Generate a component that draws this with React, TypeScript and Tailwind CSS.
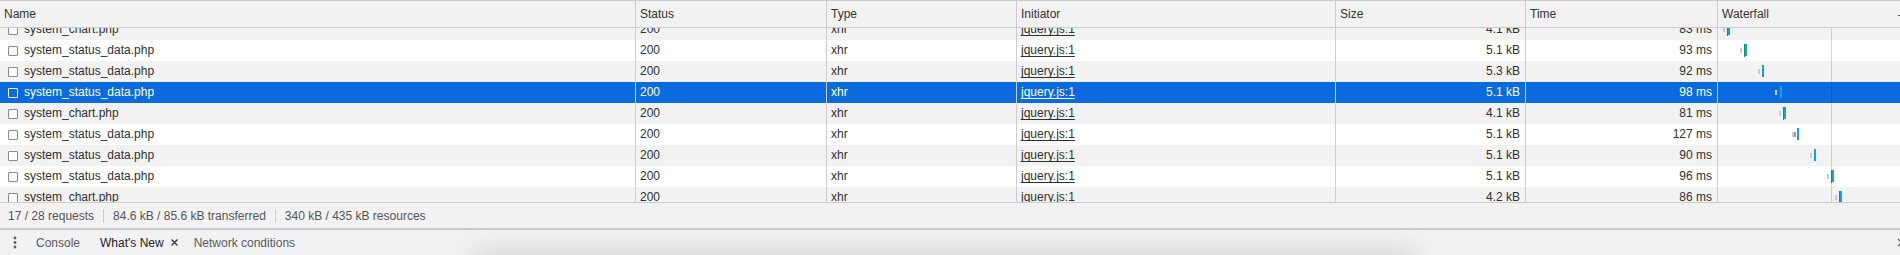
import React from 'react';

type Req = {
  name: string;
  size: string;
  time: string;
  queue: number;
  stall?: number;
  wait?: number;
  dl: number;
  selected?: boolean;
};

const requests: Req[] = [
  { name: 'system_chart.php', size: '4.1 kB', time: '83 ms', queue: 5, wait: 9, dl: 10 },
  { name: 'system_status_data.php', size: '5.1 kB', time: '93 ms', queue: 22, wait: 26, dl: 27 },
  { name: 'system_status_data.php', size: '5.3 kB', time: '92 ms', queue: 40, dl: 44 },
  { name: 'system_status_data.php', size: '5.1 kB', time: '98 ms', queue: 57, wait: 61, dl: 62, selected: true },
  { name: 'system_chart.php', size: '4.1 kB', time: '81 ms', queue: 61, wait: 65, dl: 66 },
  { name: 'system_status_data.php', size: '5.1 kB', time: '127 ms', queue: 74, stall: 76, dl: 79 },
  { name: 'system_status_data.php', size: '5.1 kB', time: '90 ms', queue: 92, dl: 96 },
  { name: 'system_status_data.php', size: '5.1 kB', time: '96 ms', queue: 109, wait: 113, dl: 114 },
  { name: 'system_chart.php', size: '4.2 kB', time: '86 ms', queue: 117, wait: 121, dl: 122 },
];

const cols = 'grid grid-cols-[636px_191px_190px_319px_190px_192px_1fr]';
const cell = 'border-r border-[#cdcdcd] px-[4px] truncate';

const Row = ({ r, i }: { r: Req; i: number }) => {
  const bg = r.selected ? 'bg-[#0b6bde] text-white' : i % 2 === 0 ? 'bg-[#f2f2f2] text-[#303030]' : 'bg-white text-[#303030]';
  return (
    <div className={`${cols} h-[21px] leading-[21px] ${bg}`}>
      <div className={`${cell} flex items-center pl-[8px]`}>
        <span className={`w-[10px] h-[10px] shrink-0 border rounded-[1px] ${r.selected ? 'border-white' : 'border-[#8a8a8a] bg-white'}`} />
        <span className="ml-[6px] truncate">{r.name}</span>
      </div>
      <div className={cell}>200</div>
      <div className={cell}>xhr</div>
      <div className={cell}>
        <span className="underline underline-offset-[2px]">jquery.js:1</span>
      </div>
      <div className={`${cell} text-right pr-[5px]`}>{r.size}</div>
      <div className={`${cell} text-right pr-[5px]`}>{r.time}</div>
      <div className="relative">
        <span className="absolute left-[113px] top-0 bottom-0 w-px bg-black/15" />
        <span className="absolute top-[8px] h-[5px] w-[2px] bg-[#cccccc]" style={{ left: r.queue }} />
        {r.stall !== undefined && (
          <span className="absolute top-[8px] h-[5px] w-[2px] bg-[#9a9a9a]" style={{ left: r.stall }} />
        )}
        {r.wait !== undefined && (
          <span className="absolute top-[4px] h-[13px] w-px bg-[#14953f]" style={{ left: r.wait }} />
        )}
        <span className="absolute top-[4px] h-[12px] w-[2px] bg-[#0aa5f0]" style={{ left: r.dl }} />
      </div>
    </div>
  );
};

export default function App() {
  return (
    <div className="w-[1900px] h-[255px] overflow-hidden bg-white text-[12px] font-['Liberation_Sans',Arial,sans-serif] flex flex-col">
      {/* header */}
      <div className={`${cols} h-[28px] shrink-0 border-t border-b border-[#cbcdd1] bg-[#f2f2f3] text-[#333] leading-[26px]`}>
        <div className={cell}>Name</div>
        <div className={cell}>Status</div>
        <div className={cell}>Type</div>
        <div className={cell}>Initiator</div>
        <div className={cell}>Size</div>
        <div className={cell}>Time</div>
        <div className="relative px-[4px]">
          Waterfall
          <span className="absolute right-0 top-[14px] w-[2px] h-px bg-[#555]" />
        </div>
      </div>

      {/* rows, scrolled a bit */}
      <div className="h-[174px] shrink-0 overflow-hidden">
        <div className="-mt-[9px]">
          {requests.map((r, i) => (
            <Row key={i} r={r} i={i} />
          ))}
        </div>
      </div>

      {/* summary bar */}
      <div className="h-[26px] shrink-0 border-t border-[#cdcdcd] bg-[#f2f2f3] text-[#555] flex items-center">
        <span className="pl-[8px] pr-[9px] border-r border-[#cdcdcd] leading-[14px]">17 / 28 requests</span>
        <span className="px-[9px] border-r border-[#cdcdcd] leading-[14px]">84.6 kB / 85.6 kB transferred</span>
        <span className="pl-[9px] leading-[14px]">340 kB / 435 kB resources</span>
      </div>

      {/* drawer tabs */}
      <div className="relative flex-1 border-t-2 border-[#c8c9cc] bg-[#f1f2f4] flex items-center overflow-hidden">
        <span className="absolute left-[470px] top-[18px] w-[950px] h-[28px] rounded-full bg-black/10 blur-[12px]" />
        <div className="relative w-[26px] flex justify-center pl-[3px]">
          <svg width="4" height="13" viewBox="0 0 4 13">
            <circle cx="2" cy="2" r="1.4" fill="#5f6368" />
            <circle cx="2" cy="6.5" r="1.4" fill="#5f6368" />
            <circle cx="2" cy="11" r="1.4" fill="#5f6368" />
          </svg>
        </div>
        <div className="relative px-[10px] text-[#5a5a5a]">Console</div>
        <div className="relative flex items-center pl-[10px] pr-[5px] text-[#222]">
          What's New
          <svg className="ml-[7px]" width="7" height="7" viewBox="0 0 7 7">
            <path d="M0.5 0.5 L6.5 6.5 M6.5 0.5 L0.5 6.5" stroke="#333" strokeWidth="1.2" />
          </svg>
        </div>
        <div className="relative pl-[11px] pr-[10px] text-[#5a5a5a]">Network conditions</div>
        <div className="flex-1" />
        <svg className="relative mr-[-6px]" width="9" height="9" viewBox="0 0 9 9">
          <path d="M1 1 L8 8 M8 1 L1 8" stroke="#555" strokeWidth="1.2" />
        </svg>
      </div>
    </div>
  );
}
